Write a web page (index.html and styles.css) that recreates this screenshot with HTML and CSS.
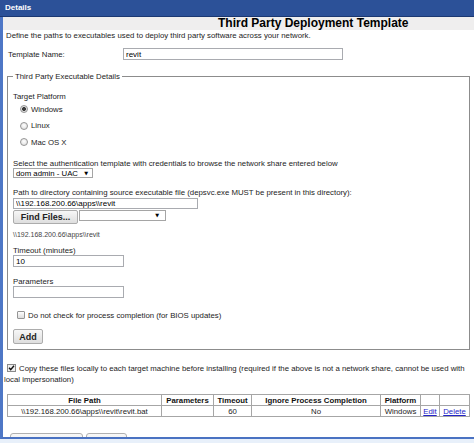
FILE: index.html
```html
<!DOCTYPE html>
<html>
<head>
<meta charset="utf-8">
<title>Details</title>
<link rel="stylesheet" href="styles.css">
</head>
<body>
<div class="header">Details</div>
<div class="panel">
  <div class="title">Third Party Deployment Template</div>
  <div class="desc">Define the paths to executables used to deploy third party software across your network.</div>
  <div class="name-row">
    <label class="name-label">Template Name:</label>
    <input class="text name-input" type="text" value="revit">
  </div>
  <fieldset class="details">
    <legend>Third Party Executable Details</legend>
    <div class="tp">Target Platform</div>
    <label class="radio-row first"><span class="radio checked"></span>Windows</label>
    <label class="radio-row"><span class="radio"></span>Linux</label>
    <label class="radio-row"><span class="radio"></span>Mac OS X</label>
    <div class="auth">Select the authentication template with credentials to browse the network share entered below</div>
    <div class="select auth-select"><span>dom admin - UAC</span><span class="arrow">▼</span></div>
    <div class="path-label">Path to directory containing source executable file (depsvc.exe MUST be present in this directory):</div>
    <input class="text path-input" type="text" value="\\192.168.200.66\apps\\revit">
    <div class="find-row">
      <button class="btn find">Find Files...</button>
      <div class="select files-select"><span></span><span class="arrow">▼</span></div>
    </div>
    <div class="small-path">\\192.168.200.66\apps\\revit</div>
    <div class="timeout-label">Timeout (minutes)</div>
    <input class="text short-input" type="text" value="10">
    <div class="params-label">Parameters</div>
    <input class="text short-input" type="text" value="">
    <label class="check-row"><span class="box"></span>Do not check for process completion (for BIOS updates)</label>
    <button class="btn add">Add</button>
  </fieldset>
  <div class="copy"><svg class="checked-box" width="9" height="8" viewBox="0 0 9 8"><rect x="0.5" y="0.5" width="8" height="7" fill="#efefef" stroke="#8a8a8a"/><path d="M2 3.8 L3.7 5.6 L7 1.8" fill="none" stroke="#111" stroke-width="1.4"/></svg>Copy these files locally to each target machine before installing (required if the above is not a network share, cannot be used with local impersonation)</div>
  <table class="files">
    <colgroup>
      <col class="c1"><col class="c2"><col class="c3"><col class="c4"><col class="c5"><col class="c6"><col class="c7">
    </colgroup>
    <thead>
      <tr><th>File Path</th><th>Parameters</th><th>Timeout</th><th>Ignore Process Completion</th><th>Platform</th><th></th><th></th></tr>
    </thead>
    <tbody>
      <tr><td>\\192.168.200.66\apps\\revit\revit.bat</td><td></td><td>60</td><td>No</td><td>Windows</td><td><a href="#">Edit</a></td><td><a href="#">Delete</a></td></tr>
    </tbody>
  </table>
  <div class="actions"><span class="act-btn wide"></span><span class="act-btn narrow"></span></div>
</div>
</body>
</html>
```
FILE: styles.css
```css
* { box-sizing: border-box; }
html, body { margin: 0; padding: 0; }
body {
  width: 474px;
  height: 443px;
  overflow: hidden;
  background: #e8f0fa;
  font-family: "Liberation Sans", Arial, sans-serif;
  font-size: 7.8px;
  line-height: 9px;
  color: #1c1c1c;
}
.header {
  height: 17px;
  background: #2c5198;
  border-bottom: 1px solid #1b3872;
  color: #fff;
  font-weight: bold;
  font-size: 8px;
  line-height: 16px;
  padding-left: 5px;
}
.panel {
  background: #fff;
  border-left: 3px solid #4e77c6;
  border-bottom: 2px solid #4a72c2;
}
.title {
  height: 13px;
  background: #efeeee;
  font-size: 12px;
  font-weight: bold;
  line-height: 13px;
  padding-left: 215px;
  color: #000;
}
.desc { margin-top: 1px; padding-left: 3px; }
.name-row {
  display: flex;
  align-items: center;
  margin-top: 8px;
  padding-left: 5px;
}
.name-label { width: 115px; }
.text {
  font-family: "Liberation Sans", Arial, sans-serif;
  font-size: 8px;
  color: #000;
  border: 1px solid #a9abb0;
  padding: 0 2px;
  margin: 0;
  background: #fff;
  outline: none;
}
.name-input { width: 220px; height: 12px; }
.details {
  margin: 11.5px 4px 0 4px;
  padding: 0 6px 5px 5px;
  border: 1px solid #8c8c8c;
  min-width: 0;
}
.details legend { padding: 0 2px; line-height: 9px; }
.tp { margin-top: 11px; }
.radio-row {
  display: flex;
  align-items: center;
  height: 10px;
  margin-top: 6.5px;
  padding-left: 7px;
}
.radio-row.first { margin-top: 3.5px; }
.radio {
  width: 8px;
  height: 8px;
  margin-right: 3px;
  border-radius: 50%;
  border: 1px solid #959595;
  background: radial-gradient(circle at 50% 40%, #ffffff, #d8d8d8);
}
.radio.checked {
  background: radial-gradient(circle, #3c3c3c 0 1.6px, #e4e4e4 2.3px, #cfcfcf 100%);
}
.auth { margin-top: 12px; }
.select {
  display: flex;
  justify-content: space-between;
  align-items: center;
  border: 1px solid #a5a5a5;
  background: #fff;
  padding: 0 4px 0 2px;
  color: #000;
}
.arrow { font-family: "DejaVu Sans", sans-serif; font-size: 5px; line-height: 5px; }
.auth-select { width: 80px; height: 10px; }
.path-label { margin-top: 10px; }
.path-input { display: block; width: 185px; height: 11px; margin-top: 0.5px; }
.find-row { display: flex; align-items: flex-start; margin-top: 1px; }
.btn {
  font-family: "Liberation Sans", Arial, sans-serif;
  font-weight: bold;
  font-size: 9px;
  color: #222;
  background: linear-gradient(#f7f7f7, #dedede);
  border: 1px solid #acacac;
  border-radius: 2px;
  padding: 0;
  margin: 0;
}
.find { width: 65px; height: 14px; }
.files-select { width: 87px; height: 11px; margin-left: 1px; padding-right: 6px; }
.small-path { font-size: 7px; margin-top: 6px; color: #444; }
.timeout-label { line-height: 8px; margin-top: 8.5px; }
.params-label { line-height: 8px; margin-top: 11px; }
.short-input { display: block; width: 111px; height: 12px; }
.check-row {
  display: flex;
  align-items: center;
  height: 10px;
  margin-top: 12px;
  padding-left: 4px;
}
.box {
  width: 8px;
  height: 8px;
  margin-right: 3px;
  border: 1px solid #959595;
  border-radius: 1px;
  background: linear-gradient(#fdfdfd, #dcdcdc);
}
.add { display: block; width: 30px; height: 15px; margin-top: 9px; }
.copy {
  margin-top: 12.5px;
  padding-left: 1px;
  padding-right: 2px;
  line-height: 11px;
}
.checked-box { vertical-align: -1px; margin-left: 3px; margin-right: 3px; }
.files {
  margin-top: 9.5px;
  margin-left: 4px;
  width: 462px;
  border-collapse: collapse;
  table-layout: fixed;
}
.c1 { width: 154px; }
.c2 { width: 52px; }
.c3 { width: 38px; }
.c4 { width: 129px; }
.c5 { width: 40px; }
.c6 { width: 19px; }
.c7 { width: 30px; }
.files th, .files td {
  border: 1px solid #a6a6a6;
  height: 11px;
  padding: 0;
  line-height: 9px;
  text-align: center;
  white-space: nowrap;
  overflow: hidden;
}
.files th { font-weight: bold; color: #111; }
.files a { color: #2323c8; text-decoration: underline; }
.actions {
  margin-top: 16px;
  height: 4px;
  overflow: hidden;
  display: flex;
  gap: 3px;
  padding-left: 7px;
}
.act-btn {
  display: block;
  height: 18px;
  border: 1px solid #b0b0b0;
  border-radius: 3px;
  background: linear-gradient(#f8f8f8, #e2e2e2);
}
.wide { width: 73px; }
.narrow { width: 41px; }
```
